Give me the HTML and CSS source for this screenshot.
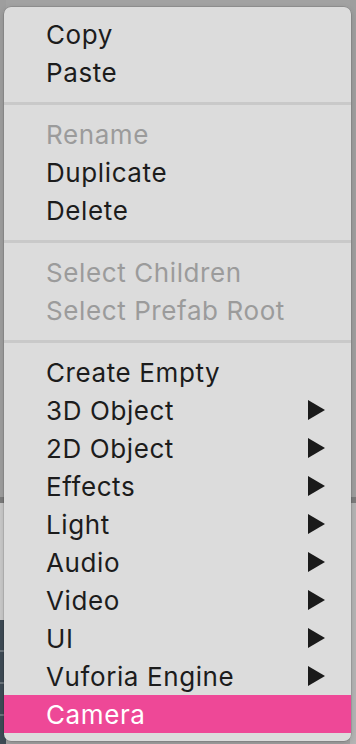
FILE: index.html
```html
<!DOCTYPE html>
<html>
<head>
<meta charset="utf-8">
<link rel="stylesheet" href="styles.css">
</head>
<body>
<div class="backdrop">
  <div class="strip strip-left">
    <div class="bg-gap"></div>
    <div class="bg-bar"></div>
    <div class="bg-light"></div>
    <div class="bg-dark"></div>
  </div>
  <div class="strip strip-right">
    <div class="bg-gap"></div>
    <div class="bg-bar"></div>
    <div class="bg-mid2"></div>
  </div>
</div>
<div class="menu">
  <div class="item">Copy</div>
  <div class="item">Paste</div>
  <div class="sep"></div>
  <div class="item disabled">Rename</div>
  <div class="item">Duplicate</div>
  <div class="item">Delete</div>
  <div class="sep"></div>
  <div class="item disabled">Select Children</div>
  <div class="item disabled">Select Prefab Root</div>
  <div class="sep"></div>
  <div class="item">Create Empty</div>
  <div class="item sub">3D Object<span class="arrow"></span></div>
  <div class="item sub">2D Object<span class="arrow"></span></div>
  <div class="item sub">Effects<span class="arrow"></span></div>
  <div class="item sub">Light<span class="arrow"></span></div>
  <div class="item sub">Audio<span class="arrow"></span></div>
  <div class="item sub">Video<span class="arrow"></span></div>
  <div class="item sub">UI<span class="arrow"></span></div>
  <div class="item sub">Vuforia Engine<span class="arrow"></span></div>
  <div class="item selected">Camera</div>
</div>
</body>
</html>
```
FILE: styles.css
```css
html, body {
  margin: 0;
  padding: 0;
}
body {
  width: 356px;
  height: 744px;
  background: #a2a2a2;
  position: relative;
  overflow: hidden;
  font-family: Inter, "Noto Sans", sans-serif;
}
.backdrop {
  position: absolute;
  inset: 0;
  display: flex;
  justify-content: space-between;
}
.strip {
  display: flex;
  flex-direction: column;
  width: 6px;
}
.bg-gap { height: 497px; background: #9e9e9e; }
.bg-bar { height: 6px; background: #7c7c7c; }
.bg-light { height: 117px; background: #c9c9c9; }
.bg-dark {
  flex: 1;
  background: repeating-linear-gradient(#3e4b55 0, #3e4b55 30px, #6c757c 30px, #6c757c 32px);
}
.bg-mid2 { flex: 1; background: #b4b4b4; }

.menu {
  position: absolute;
  left: 4px;
  top: 7px;
  width: 347px;
  height: 734px;
  box-sizing: border-box;
  padding: 8px 0 0;
  background: #dcdcdc;
  border-radius: 7px;
  box-shadow: 0 0 0 0.5px rgba(0,0,0,0.18), 0 2px 6px rgba(0,0,0,0.15);
  overflow: hidden;
  display: flex;
  flex-direction: column;
}
.item {
  height: 38px;
  flex: none;
  display: flex;
  align-items: center;
  justify-content: space-between;
  padding: 0 26px 0 42px;
  font-size: 26px;
  color: #1c1c1c;
  letter-spacing: 0.6px;
}
.item.disabled { color: #9b9b9b; }
.item.selected {
  background: #ee4897;
  color: #ffffff;
}
.sep {
  flex: none;
  height: 3px;
  margin: 11px 0 10px;
  background: #c9c9c9;
}
.arrow {
  width: 0;
  height: 0;
  border-top: 10px solid transparent;
  border-bottom: 10px solid transparent;
  border-left: 17px solid #1a1a1a;
}
```
